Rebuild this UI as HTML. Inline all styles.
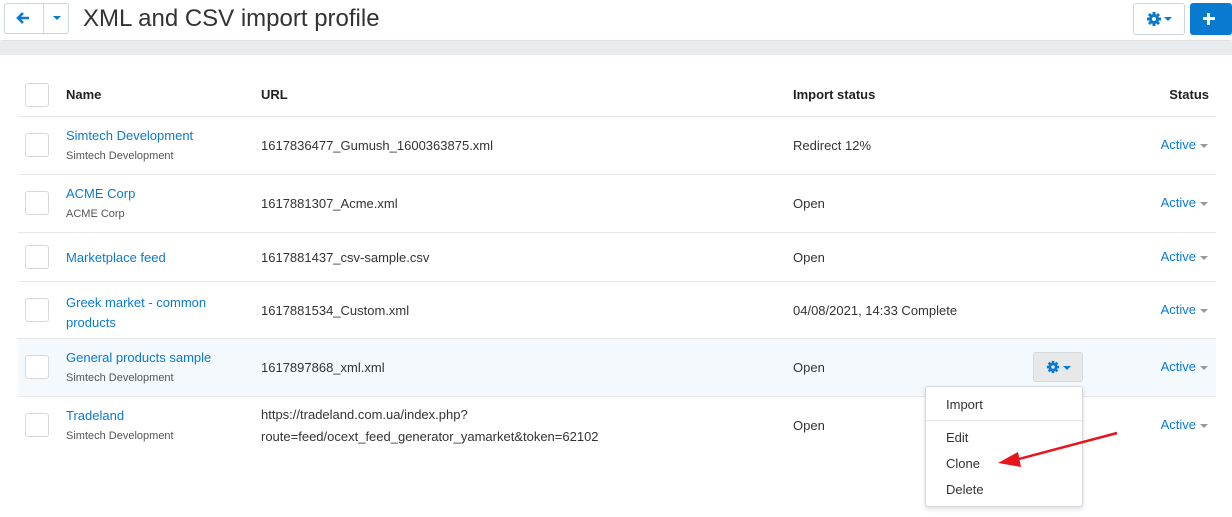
<!DOCTYPE html>
<html><head><style>
body{margin:0;width:1232px;height:517px;background:#fff;font-family:"Liberation Sans",Arial,sans-serif;font-size:13px;color:#333;position:relative;overflow:hidden}
.a{position:absolute}
.hdr{left:0;top:0;width:1232px;height:40px;background:#fff;box-shadow:0 1px 3px rgba(0,0,0,.2)}
.band{left:0;top:41px;width:1232px;height:14px;background:#e9ecef}
.btn{border:1px solid #ccd4dc;border-radius:3px;background:#fff;box-sizing:border-box}
.cb{width:24px;height:24px;border:1px solid #d5d8dc;border-radius:3px;box-sizing:border-box;background:#fff}
.line{height:1px;background:#e5e8eb;left:18px;width:1198px}
.lnk{color:#0a7ad1}
.sm{font-size:11px;color:#555}
.th{font-weight:bold;color:#222}
.act{color:#0a7ad1;right:24px}
.act:after{content:"";display:inline-block;margin-left:4px;border-left:4px solid transparent;border-right:4px solid transparent;border-top:4px solid #999;vertical-align:middle}
</style></head><body>
<div class="a hdr"></div>
<div class="a band"></div>
<div class="a btn" style="left:4px;top:3px;width:65px;height:31px"></div>
<div class="a" style="left:43px;top:3px;width:1px;height:31px;background:#ccd4dc"></div>
<svg class="a" style="left:16px;top:12px" width="14" height="12" viewBox="0 0 14 12"><path d="M7 1L2 6l5 5M2 6h11" stroke="#0a7ad1" stroke-width="2.6" fill="none"/></svg>
<div class="a" style="left:53px;top:16px;border-left:4px solid transparent;border-right:4px solid transparent;border-top:4px solid #0a7ad1"></div>
<div class="a" style="left:83px;top:5px;font-size:24px;color:#333">XML and CSV import profile</div>
<div class="a btn" style="left:1133px;top:3px;width:52px;height:32px"></div>
<svg class="a" style="left:1146px;top:11px" width="16" height="16" viewBox="0 0 16 16"><circle cx="8" cy="8" r="5" fill="#0a7ad1"/><g stroke="#0a7ad1" stroke-width="3"><path d="M8 1v14M1 8h14M3 3l10 10M13 3L3 13"/></g><circle cx="8" cy="8" r="2" fill="#fff"/></svg>
<div class="a" style="left:1164px;top:17px;border-left:4px solid transparent;border-right:4px solid transparent;border-top:4px solid #0a7ad1"></div>
<div class="a" style="left:1190px;top:3px;width:42px;height:32px;background:#0a7ad1;border-radius:3px"></div>
<div class="a" style="left:1203px;top:17px;width:12px;height:3px;background:#fff"></div>
<div class="a" style="left:1207px;top:13px;width:3px;height:12px;background:#fff"></div>

<div class="a cb" style="left:25px;top:83px"></div>
<div class="a th" style="left:66px;top:87px">Name</div>
<div class="a th" style="left:261px;top:87px">URL</div>
<div class="a th" style="left:793px;top:87px">Import status</div>
<div class="a th" style="right:23px;top:87px">Status</div>
<div class="a line" style="top:116px"></div>

<div class="a cb" style="left:25px;top:133px"></div>
<div class="a lnk" style="left:66px;top:128px">Simtech Development</div>
<div class="a sm" style="left:66px;top:150px">Simtech Development</div>
<div class="a" style="left:261px;top:138px">1617836477_Gumush_1600363875.xml</div>
<div class="a" style="left:793px;top:138px">Redirect 12%</div>
<div class="a act" style="top:137px">Active</div>
<div class="a line" style="top:174px"></div>

<div class="a cb" style="left:25px;top:191px"></div>
<div class="a lnk" style="left:66px;top:186px">ACME Corp</div>
<div class="a sm" style="left:66px;top:208px">ACME Corp</div>
<div class="a" style="left:261px;top:196px">1617881307_Acme.xml</div>
<div class="a" style="left:793px;top:196px">Open</div>
<div class="a act" style="top:195px">Active</div>
<div class="a line" style="top:232px"></div>

<div class="a cb" style="left:25px;top:245px"></div>
<div class="a lnk" style="left:66px;top:250px">Marketplace feed</div>
<div class="a" style="left:261px;top:250px">1617881437_csv-sample.csv</div>
<div class="a" style="left:793px;top:250px">Open</div>
<div class="a act" style="top:249px">Active</div>
<div class="a line" style="top:281px"></div>

<div class="a cb" style="left:25px;top:298px"></div>
<div class="a lnk" style="left:66px;top:293px;line-height:20px">Greek market - common<br>products</div>
<div class="a" style="left:261px;top:303px">1617881534_Custom.xml</div>
<div class="a" style="left:793px;top:303px">04/08/2021, 14:33 Complete</div>
<div class="a act" style="top:302px">Active</div>
<div class="a line" style="top:338px"></div>

<div class="a" style="left:18px;top:339px;width:1198px;height:57px;background:#f3f9fd"></div>
<div class="a cb" style="left:25px;top:355px"></div>
<div class="a lnk" style="left:66px;top:350px">General products sample</div>
<div class="a sm" style="left:66px;top:372px">Simtech Development</div>
<div class="a" style="left:261px;top:360px">1617897868_xml.xml</div>
<div class="a" style="left:793px;top:360px">Open</div>
<div class="a" style="left:1033px;top:352px;width:50px;height:30px;background:#e6e8ea;border:1px solid #d5d8dc;border-radius:3px;box-sizing:border-box"></div>
<svg class="a" style="left:1046px;top:360px" width="14" height="14" viewBox="0 0 16 16"><circle cx="8" cy="8" r="5" fill="#0a7ad1"/><g stroke="#0a7ad1" stroke-width="3"><path d="M8 1v14M1 8h14M3 3l10 10M13 3L3 13"/></g><circle cx="8" cy="8" r="2" fill="#e6e8ea"/></svg>
<div class="a" style="left:1063px;top:366px;border-left:4px solid transparent;border-right:4px solid transparent;border-top:4px solid #0a7ad1"></div>
<div class="a act" style="top:359px">Active</div>
<div class="a line" style="top:396px"></div>

<div class="a cb" style="left:25px;top:413px"></div>
<div class="a lnk" style="left:66px;top:408px">Tradeland</div>
<div class="a sm" style="left:66px;top:430px">Simtech Development</div>
<div class="a" style="left:261px;top:404px;line-height:22px">https://tradeland.com.ua/index.php?<br>route=feed/ocext_feed_generator_yamarket&amp;token=62102</div>
<div class="a" style="left:793px;top:418px">Open</div>
<div class="a act" style="top:417px">Active</div>

<div class="a" style="left:925px;top:386px;width:158px;height:121px;background:#fff;border:1px solid #d5d8dc;border-radius:3px;box-shadow:0 2px 5px rgba(0,0,0,.15);box-sizing:border-box"></div>
<div class="a" style="left:946px;top:397px">Import</div>
<div class="a" style="left:926px;top:420px;width:156px;height:1px;background:#e5e8eb"></div>
<div class="a" style="left:946px;top:430px">Edit</div>
<div class="a" style="left:946px;top:456px">Clone</div>
<div class="a" style="left:946px;top:482px">Delete</div>
<svg class="a" style="left:990px;top:425px" width="135" height="45"><path d="M127 8L25 35" stroke="#e8141b" stroke-width="2.5"/><path d="M8 38L28 27L31 42Z" fill="#e8141b"/></svg>
</body></html>
